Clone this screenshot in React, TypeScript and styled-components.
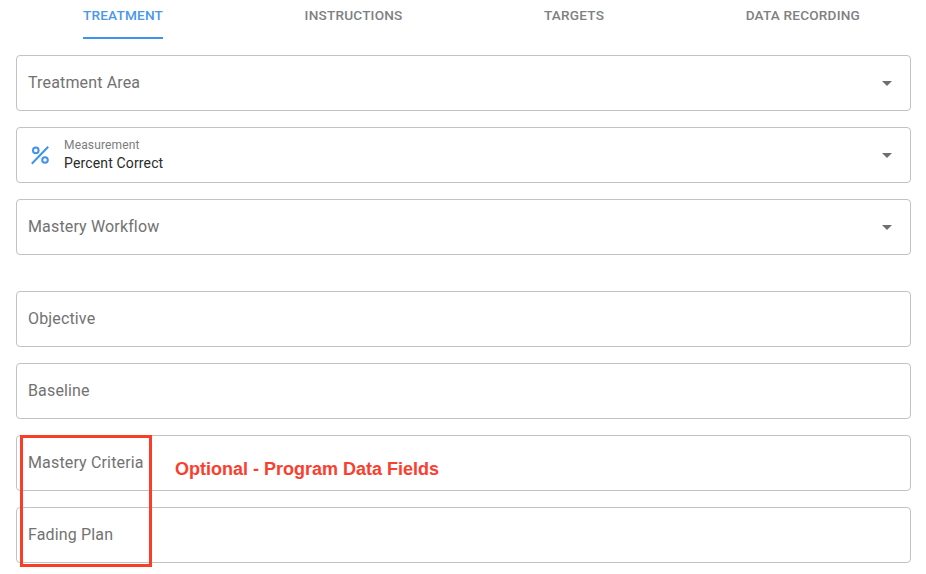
import React from 'react';
import styled, { createGlobalStyle } from 'styled-components';

const GlobalStyle = createGlobalStyle`
  html, body {
    margin: 0;
    padding: 0;
    background: #fff;
    font-family: Roboto, sans-serif;
  }
`;

const Page = styled.div`
  position: relative;
  width: 926px;
  height: 574px;
  overflow: hidden;
`;

const TabBar = styled.div`
  display: flex;
  gap: 141.5px;
  height: 39px;
  padding: 0 0 0 83px;
`;

const Tab = styled.div<{ $active?: boolean }>`
  height: 39px;
  box-sizing: border-box;
  padding-top: 8px;
  font-size: 13.6px;
  line-height: 15px;
  font-weight: 500;
  letter-spacing: 0.2px;
  white-space: nowrap;
  color: ${props => (props.$active ? '#4a98eb' : '#808083')};
  border-bottom: 2px solid ${props => (props.$active ? '#3f93ea' : 'transparent')};
`;

const Form = styled.div`
  display: flex;
  flex-direction: column;
  gap: 36px;
  padding: 16px 15px 0 16px;
`;

const Group = styled.div`
  display: flex;
  flex-direction: column;
  gap: 16px;
`;

const Field = styled.div`
  display: flex;
  align-items: center;
  height: 56px;
  box-sizing: border-box;
  padding: 0 11px;
  border: 1px solid #c2c2c2;
  border-radius: 4px;
`;

const Label = styled.span`
  flex: 1;
  margin-top: -2px;
  font-size: 16px;
  letter-spacing: 0.15px;
  color: #727272;
`;

const FieldIcon = styled.svg`
  width: 24px;
  height: 24px;
  margin-right: 12px;
  color: #3f93ea;
`;

const Stack = styled.div`
  flex: 1;
  display: flex;
  flex-direction: column;
  gap: 3px;
  margin-top: -2px;
`;

const SmallLabel = styled.span`
  font-size: 12px;
  line-height: 14px;
  letter-spacing: 0.15px;
  color: #7c7c7c;
`;

const Value = styled.span`
  font-size: 14px;
  line-height: 16px;
  letter-spacing: 0.15px;
  color: #2a2a2a;
`;

const Caret = styled.svg`
  width: 24px;
  height: 24px;
  color: #6f6f6f;
`;

const Highlight = styled.div`
  position: absolute;
  left: 20px;
  top: 435px;
  width: 132px;
  height: 132px;
  box-sizing: border-box;
  border: 3px solid #fc3d25;
`;

const Note = styled.div`
  position: absolute;
  left: 175px;
  top: 459px;
  font-family: 'Liberation Sans', Arial, sans-serif;
  font-size: 18px;
  line-height: 21px;
  font-weight: 700;
  color: #fb3e2e;
  white-space: nowrap;
`;

const tabs = ['TREATMENT', 'INSTRUCTIONS', 'TARGETS', 'DATA RECORDING'];

const ArrowDown = () => (
  <Caret viewBox="0 0 24 24">
    <path d="M7 10l5 5 5-5z" fill="currentColor" />
  </Caret>
);

const App: React.FC = () => (
  <Page>
    <GlobalStyle />
    <TabBar>
      {tabs.map((tab, i) => (
        <Tab key={tab} $active={i === 0}>
          {tab}
        </Tab>
      ))}
    </TabBar>
    <Form>
      <Group>
        <Field>
          <Label>Treatment Area</Label>
          <ArrowDown />
        </Field>
        <Field>
          <FieldIcon viewBox="0 0 24 24" fill="none" stroke="currentColor" strokeWidth="2">
            <circle cx="7.8" cy="7.4" r="2.8" />
            <circle cx="17" cy="17" r="2.8" />
            <path d="M19.5 4.5L4.5 20" strokeLinecap="square" />
          </FieldIcon>
          <Stack>
            <SmallLabel>Measurement</SmallLabel>
            <Value>Percent Correct</Value>
          </Stack>
          <ArrowDown />
        </Field>
        <Field>
          <Label>Mastery Workflow</Label>
          <ArrowDown />
        </Field>
      </Group>
      <Group>
        <Field>
          <Label>Objective</Label>
        </Field>
        <Field>
          <Label>Baseline</Label>
        </Field>
        <Field>
          <Label>Mastery Criteria</Label>
        </Field>
        <Field>
          <Label>Fading Plan</Label>
        </Field>
      </Group>
    </Form>
    <Highlight />
    <Note>Optional - Program Data Fields</Note>
  </Page>
);

export default App;
